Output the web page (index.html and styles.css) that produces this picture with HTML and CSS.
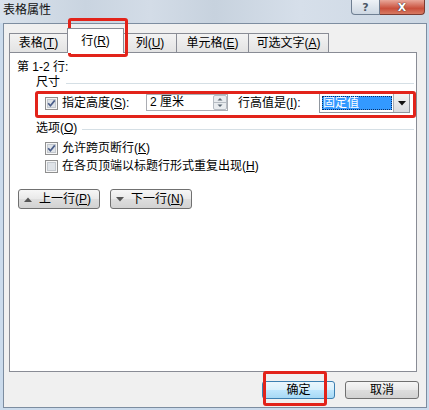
FILE: index.html
```html
<!DOCTYPE html>
<html lang="zh-CN">
<head>
<meta charset="utf-8">
<title>表格属性</title>
<link rel="stylesheet" href="styles.css">
</head>
<body>
<div class="titlebar">
  <span class="title">表格属性</span>
  <div class="controls">
    <span class="help">?</span>
    <span class="close">X</span>
  </div>
</div>
<div class="frame">
  <div class="tabs">
    <span class="tab t1">表格(<u>T</u>)</span>
    <span class="tab t2 sel">行(<u>R</u>)</span>
    <span class="tab t3">列(<u>U</u>)</span>
    <span class="tab t4">单元格(<u>E</u>)</span>
    <span class="tab t5">可选文字(<u>A</u>)</span>
  </div>
  <div class="panel">
    <div class="line1">第 1-2 行:</div>
    <div class="group"><span>尺寸</span><i class="rule"></i></div>
    <div class="row">
      <svg class="cb" width="13" height="13" viewBox="0 0 13 13"><rect x="0.5" y="0.5" width="12" height="12" fill="#f6f6f6" stroke="#8f8f8f"/><rect x="2.5" y="2.5" width="8" height="8" fill="#dfe3e8" stroke="#c3c8ce"/><path d="M3.2 6.3 L5.4 8.8 L9.8 3.4" fill="none" stroke="#4b5e8a" stroke-width="1.7"/></svg>
      <span class="lab1">指定高度(<u>S</u>):</span>
      <span class="spin">
        <span class="spin-val">2 厘米</span>
        <span class="spin-btn">
          <svg width="14" height="15" viewBox="0 0 14 15"><rect x="0.5" y="0.5" width="13" height="14" rx="1.5" fill="#e9ecef" stroke="#b6bcc3"/><line x1="1" y1="7.5" x2="13" y2="7.5" stroke="#b6bcc3"/><path d="M4.5 5.5 L7 3 L9.5 5.5 Z" fill="#5b6673"/><path d="M4.5 9.5 L7 12 L9.5 9.5 Z" fill="#5b6673"/></svg>
        </span>
      </span>
      <span class="lab2">行高值是(<u>I</u>):</span>
      <span class="select">
        <span class="sel-val">固定值</span>
        <span class="sel-btn"><svg width="8" height="5" viewBox="0 0 8 5"><path d="M0 0 H8 L4 4.5 Z" fill="#111"/></svg></span>
      </span>
    </div>
    <div class="group g2"><span>选项(<u>O</u>)</span><i class="rule"></i></div>
    <div class="check first">
      <svg class="cb" width="13" height="13" viewBox="0 0 13 13"><rect x="0.5" y="0.5" width="12" height="12" fill="#f6f6f6" stroke="#8f8f8f"/><rect x="2.5" y="2.5" width="8" height="8" fill="#dfe3e8" stroke="#c3c8ce"/><path d="M3.2 6.3 L5.4 8.8 L9.8 3.4" fill="none" stroke="#4b5e8a" stroke-width="1.7"/></svg>
      <span>允许跨页断行(<u>K</u>)</span>
    </div>
    <div class="check">
      <svg class="cb" width="13" height="13" viewBox="0 0 13 13"><rect x="0.5" y="0.5" width="12" height="12" fill="#f6f6f6" stroke="#8f8f8f"/><rect x="2.5" y="2.5" width="8" height="8" fill="#dfe3e8" stroke="#c3c8ce"/></svg>
      <span>在各页顶端以标题行形式重复出现(<u>H</u>)</span>
    </div>
    <div class="navs">
      <span class="btn nav"><svg width="8" height="5" viewBox="0 0 8 5"><path d="M0 5 H8 L4 0.5 Z" fill="#555"/></svg>上一行(<u>P</u>)</span>
      <span class="btn nav"><svg width="8" height="5" viewBox="0 0 8 5"><path d="M0 0 H8 L4 4.5 Z" fill="#555"/></svg>下一行(<u>N</u>)</span>
    </div>
  </div>
  <div class="footer">
    <span class="btn ok">确定</span>
    <span class="btn cancel">取消</span>
  </div>
</div>
<div class="mark m1"></div>
<div class="mark m2"></div>
<div class="mark m3"></div>
</body>
</html>
```
FILE: styles.css
```css
html, body {
  margin: 0;
  padding: 0;
}
body {
  width: 429px;
  height: 410px;
  overflow: hidden;
  position: relative;
  background: #cbdbec;
  font-family: "Liberation Sans", "Noto Sans CJK SC", sans-serif;
  font-size: 12px;
  color: #000;
}
u { text-decoration: underline; text-underline-offset: 1px; }

.titlebar {
  height: 23px;
  display: flex;
  align-items: flex-start;
  background: linear-gradient(90deg, #d9e2ec 0%, #c9d4e0 20%, #d3dce7 35%, #c7d2de 50%, #d6dfea 70%, #ccd7e3 100%);
}
.title {
  padding-left: 3px;
  line-height: 20px;
  font-size: 12px;
  color: #111;
}
.controls {
  margin-left: auto;
  margin-right: 4px;
  display: flex;
}
.help, .close {
  height: 14px;
  display: flex;
  align-items: center;
  justify-content: center;
  font-weight: bold;
  font-family: "DejaVu Sans", sans-serif;
  font-size: 11px;
  line-height: 1;
}
.help {
  width: 27px;
  border: 1px solid #6f7f92;
  border-top: none;
  border-radius: 0 0 0 4px;
  background: linear-gradient(#eef2f6, #cdd7e2);
  color: #4d5866;
}
.close {
  width: 44px;
  border: 1px solid #7b3b31;
  border-top: none;
  border-left: none;
  border-radius: 0 0 4px 0;
  background: linear-gradient(#e9a89a, #c9503c 60%, #d77a62);
  color: #fff;
  text-shadow: 0 0 1px #333, 0 0 1px #333;
}

.frame {
  margin: 0 2px 0 3px;
  height: 383px;
  border: 1px solid #7d8da0;
  background: #f0f0f0;
  display: flex;
  flex-direction: column;
}

.tabs {
  height: 28px;
  display: flex;
  align-items: flex-end;
  padding-left: 5px;
}
.tab {
  height: 19px;
  box-sizing: border-box;
  border: 1px solid #898c95;
  border-bottom: none;
  border-right: none;
  background: linear-gradient(#f3f3f3, #e3e3e3);
  display: flex;
  align-items: center;
  justify-content: center;
  line-height: 14px;
}
.tab.t5 { border-right: 1px solid #898c95; }
.tab.sel {
  height: 24px;
  background: #fff;
  border-right: 1px solid #898c95;
  position: relative;
  z-index: 1;
  margin-bottom: -1px;
  height: 25px;
  padding-bottom: 1px;
}
.t1 { width: 58px; }
.t2 { width: 57px; }
.t3 { width: 52px; border-left: none !important; }
.t4 { width: 72px; }
.t5 { width: 81px; }

.panel {
  margin-left: 5px;
  width: 408px;
  height: 320px;
  box-sizing: border-box;
  border: 1px solid #898c95;
  background: #fff;
  padding: 7px 2px 0 7px;
}
.line1 {
  line-height: 14px;
}
.group {
  margin-top: 1px;
  padding-left: 19px;
  display: flex;
  align-items: center;
  line-height: 14px;
}
.group .rule {
  flex: 1;
  height: 1px;
  background: #d5dfe5;
  margin-left: 6px;
  margin-top: 2px;
}
.group.g2 { margin-top: 7px; }
.group.g2 .rule { margin-left: 5px; }

.row {
  margin-top: 3px;
  height: 22px;
  display: flex;
  align-items: center;
  padding-left: 28px;
}
.cb { flex: none; display: block; }
.lab1 {
  margin-left: 4px;
  width: 84px;
  line-height: 14px;
}
.spin {
  width: 82px;
  height: 17px;
  box-sizing: border-box;
  border: 1px solid #abadb3;
  border-top-color: #abadb3;
  display: flex;
  align-items: center;
  background: #fff;
  margin-top: -2px;
}
.spin-val {
  flex: 1;
  padding-left: 3px;
  line-height: 14px;
}
.spin-btn { display: flex; }
.spin-btn svg { display: block; }
.lab2 {
  margin-left: 10px;
  width: 81px;
  line-height: 14px;
}
.select {
  width: 91px;
  height: 20px;
  box-sizing: border-box;
  border: 1px solid #8f969f;
  display: flex;
  align-items: stretch;
  background: #fff;
  padding: 2px 0 2px 2px;
}
.sel-val {
  flex: 1;
  background: #3399ff;
  color: #fff;
  line-height: 14px;
  padding-left: 1px;
  outline: 1px dotted #0c2f64;
  outline-offset: -1px;
}
.sel-btn {
  width: 16px;
  margin: -2px 0 -2px 1px;
  box-sizing: border-box;
  border-left: 1px solid #a7acb3;
  background: linear-gradient(#f2f2f2, #d9dce0);
  display: flex;
  align-items: center;
  justify-content: center;
}
.sel-btn svg { display: block; }

.check {
  height: 18px;
  display: flex;
  align-items: center;
  padding-left: 28px;
  line-height: 14px;
}
.check.first { margin-top: 4px; }
.check span { margin-left: 4px; }

.navs {
  margin-top: 14px;
  display: flex;
  gap: 10px;
  padding-left: 1px;
}
.btn {
  height: 20px;
  box-sizing: border-box;
  border: 1px solid #707070;
  border-radius: 3px;
  background: linear-gradient(#f6f6f6 0%, #e9e9e9 48%, #dddddd 52%, #d2d2d2 100%);
  display: flex;
  align-items: center;
  line-height: 14px;
}
.nav {
  width: 82px;
  padding-left: 5px;
}
.nav svg { display: block; margin-right: 7px; }

.footer {
  flex: 1;
  display: flex;
  align-items: flex-start;
  justify-content: flex-end;
  padding: 9px 7px 0 0;
  gap: 10px;
}
.ok, .cancel {
  width: 73px;
  height: 18px;
  justify-content: center;
}
.ok {
  border-color: #3c7fb1;
  background: linear-gradient(#eaf6fd 0%, #d9f0fc 48%, #bee6fd 52%, #a7d9f5 100%);
}
.cancel { width: 74px; }

.mark {
  position: absolute;
  box-sizing: border-box;
  border: 3px solid #e2231a;
  border-radius: 3px;
}
.m1 { left: 68px; top: 18px; width: 60px; height: 39px; }
.m2 { left: 35px; top: 91px; width: 381px; height: 27px; }
.m3 { left: 263px; top: 371px; width: 64px; height: 35px; }
```
